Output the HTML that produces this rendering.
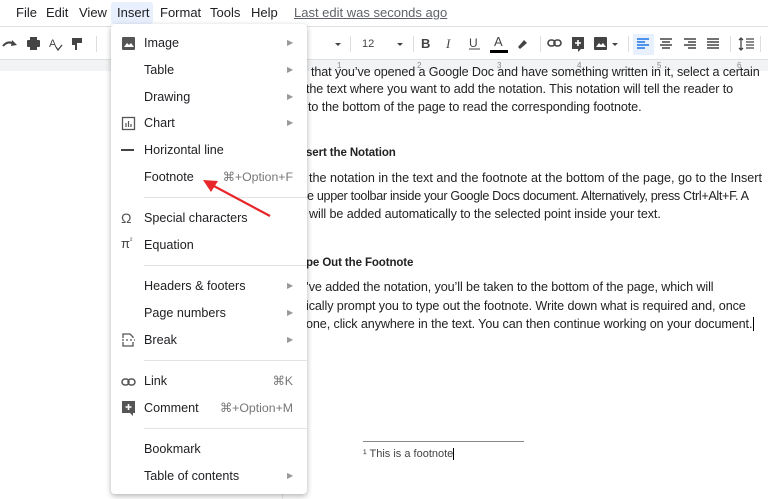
<!DOCTYPE html>
<html><head><meta charset="utf-8"><style>
*{margin:0;padding:0;box-sizing:border-box}
body{width:768px;height:499px;overflow:hidden;background:#fff;font-family:"Liberation Sans",Arial,sans-serif;position:relative;color:#202124}
.abs{position:absolute;white-space:nowrap}
.mb{top:5px;font-size:13px;color:#202124}
.t{font-size:12.6px;color:#222;position:absolute;white-space:nowrap;font-family:"Liberation Sans",sans-serif;letter-spacing:-0.1px}
.h{font-weight:bold;font-size:11.5px}
.menu{position:absolute;left:111px;top:24px;width:196px;height:470px;background:#fff;border-radius:4px;box-shadow:0 2px 6px rgba(0,0,0,.3)}
.mi{position:absolute;left:33px;font-size:12.6px;color:#202124;white-space:nowrap}
.arr{position:absolute;left:176px;font-size:8px;color:#999}
.sc{position:absolute;right:14px;font-size:12.3px;color:#777}
.sep{position:absolute;left:33px;right:0;height:1px;background:#e2e2e2}
.ic{position:absolute;left:10px}
</style></head><body>
<div class="abs" style="left:111px;top:2px;width:42px;height:22px;background:#e8f0fe;border-radius:3px"></div>
<div class="abs mb" style="left:16px">File</div>
<div class="abs mb" style="left:46px">Edit</div>
<div class="abs mb" style="left:79px">View</div>
<div class="abs mb" style="left:117px">Insert</div>
<div class="abs mb" style="left:160px">Format</div>
<div class="abs mb" style="left:210px">Tools</div>
<div class="abs mb" style="left:251px">Help</div>
<div class="abs mb" style="left:294px;color:#5f6368;text-decoration:underline">Last edit was seconds ago</div>
<div class="abs" style="left:0;top:26px;width:768px;height:1px;background:#e0e0e0"></div>
<svg class="abs" style="left:0;top:30px" width="768" height="28" viewBox="0 0 768 28">
<g fill="#444" stroke="#444">
<path d="M3 16 q5-6 11-2" fill="none" stroke-width="2"/><path d="M12 10 l5 5 l-6 1z" stroke="none"/>
<rect x="27" y="10" width="13" height="7" rx="1" stroke="none"/><rect x="30" y="7" width="7" height="3" stroke="none"/><rect x="30" y="16" width="7" height="4" stroke="none"/>
<text x="49" y="17" font-size="11" stroke="none" font-family="Liberation Sans">A</text><path d="M56 17 l2 3 l4-5" fill="none" stroke-width="1.3"/>
<path d="M72 8 h10 v5 h-5 v7 h-2 v-5 h-3z" stroke="none"/>
<rect x="96" y="6" width="1" height="16" fill="#ddd" stroke="none"/>
<path d="M335 13 l3 3 l3-3z" stroke="none"/><rect x="350" y="6" width="1" height="16" fill="#ddd" stroke="none"/>
<text x="362" y="17" font-size="11" stroke="none" font-family="Liberation Sans">12</text>
<path d="M397 13 l3 3 l3-3z" stroke="none"/><rect x="413" y="6" width="1" height="16" fill="#ddd" stroke="none"/>
<text x="421" y="18" font-size="13" font-weight="bold" stroke="none" font-family="Liberation Sans">B</text>
<text x="446" y="18" font-size="13" font-style="italic" stroke="none" font-family="Liberation Serif">I</text>
<text x="469" y="17" font-size="12" stroke="none" font-family="Liberation Sans">U</text>
<path d="M469 19 h11" stroke-width="1"/>
<text x="494" y="16" font-size="13" stroke="none" font-family="Liberation Sans">A</text><rect x="490" y="20" width="18" height="3" fill="#000" stroke="none"/>
<path d="M518 17 l6-7 l3 3 l-7 6z" stroke="none"/>
<rect x="540" y="6" width="1" height="16" fill="#ddd" stroke="none"/>
<rect x="548" y="10" width="7" height="6" rx="3" fill="none" stroke-width="1.6"/><rect x="554" y="10" width="7" height="6" rx="3" fill="none" stroke-width="1.6"/>
<path d="M572 7 h12 v12 h-3 l-3 3 v-3 h-6z" stroke="none"/><path d="M578 10 v6 M575 13 h6" stroke="#fff" stroke-width="1.6"/>
<rect x="594" y="7" width="13" height="13" rx="1" stroke="none"/><path d="M596 17 l3-4 l2 2 l2-2 l3 4z" fill="#fff" stroke="none"/>
<path d="M612 13 l3 3 l3-3z" stroke="none"/>
<rect x="628" y="6" width="1" height="16" fill="#ddd" stroke="none"/>
<rect x="633" y="4" width="21" height="21" fill="#e8f0fe" stroke="none"/>
<path d="M637 9h12M637 12h8M637 15h12M637 18h8" stroke="#1a73e8" stroke-width="1.4"/>
<path d="M660 9h12M662 12h8M660 15h12M662 18h8" stroke-width="1.4"/>
<path d="M684 9h12M688 12h8M684 15h12M688 18h8" stroke-width="1.4"/>
<path d="M707 9h12M707 12h12M707 15h12M707 18h12" stroke-width="1.4"/>
<rect x="730" y="6" width="1" height="16" fill="#ddd" stroke="none"/>
<path d="M741 8 v12 M739 10 l2-2 2 2 M739 18 l2 2 2-2 M746 9h8M746 12h8M746 15h8M746 18h8" fill="none" stroke-width="1.3"/>
<rect x="760" y="6" width="1" height="16" fill="#ddd" stroke="none"/>
</g></svg>
<div class="abs" style="left:0;top:59px;width:768px;height:12px;background:#f1f3f4;border-top:1px solid #e0e0e0"></div>
<svg class="abs" style="left:300px;top:60px" width="468" height="11"><g fill="#888" font-size="8" font-family="Liberation Sans">
<text x="37" y="8">1</text><text x="117" y="8">2</text><text x="197" y="8">3</text><text x="277" y="8">4</text><text x="357" y="8">5</text><text x="437" y="8">6</text></g></svg>
<div class="abs" style="left:282px;top:71px;width:1px;height:428px;background:#e8e8e8"></div>
<div class="t" style="left:311px;top:65px;letter-spacing:-0.13px">that you’ve opened a Google Doc and have something written in it, select a certain</div>
<div class="t" style="left:306px;top:82px">the text where you want to add the notation. This notation will tell the reader to</div>
<div class="t" style="left:308px;top:100px">to the bottom of the page to read the corresponding footnote.</div>
<div class="t h" style="left:306px;top:147px">sert the Notation</div>
<div class="t" style="left:309px;top:171px;letter-spacing:0px">the notation in the text and the footnote at the bottom of the page, go to the Insert</div>
<div class="t" style="left:307px;top:189px;letter-spacing:-0.33px">e upper toolbar inside your Google Docs document. Alternatively, press Ctrl+Alt+F. A</div>
<div class="t" style="left:309px;top:207px">will be added automatically to the selected point inside your text.</div>
<div class="t h" style="left:306px;top:257px">pe Out the Footnote</div>
<div class="t" style="left:306px;top:280px">’ve added the notation, you’ll be taken to the bottom of the page, which will</div>
<div class="t" style="left:306px;top:299px">ically prompt you to type out the footnote. Write down what is required and, once</div>
<div class="t" style="left:306px;top:317px">one, click anywhere in the text. You can then continue working on your document.<span style="border-left:1.5px solid #000;margin-left:1px"></span></div>
<div class="abs" style="left:363px;top:441px;width:161px;height:1px;background:#888"></div>
<div class="abs" style="left:363px;top:448px;font-size:11px;color:#444">¹ This is a footnote<span style="border-left:1px solid #000"></span></div>
<div class="menu">
<svg class="ic" style="top:12px" width="16" height="16"><rect x="1" y="1" width="13" height="13" rx="1" fill="#555"/><path d="M3 11 l3-4 l2 2 l2-2 l3 4z" fill="#fff"/></svg>
<div class="mi" style="top:12px">Image</div><div class="arr" style="top:14px">▶</div>
<div class="mi" style="top:39px">Table</div><div class="arr" style="top:41px">▶</div>
<div class="mi" style="top:66px">Drawing</div><div class="arr" style="top:68px">▶</div>
<svg class="ic" style="top:92px" width="16" height="16"><rect x="1.5" y="1.5" width="12" height="12" fill="none" stroke="#555" stroke-width="1.3"/><path d="M5 11V7M7.5 11V5M10 11V8" stroke="#555" stroke-width="1.2"/></svg>
<div class="mi" style="top:92px">Chart</div><div class="arr" style="top:94px">▶</div>
<div class="abs" style="left:10px;top:125px;width:13px;height:1.5px;background:#444"></div>
<div class="mi" style="top:119px">Horizontal line</div>
<div class="mi" style="top:146px">Footnote</div><div class="sc" style="top:146px">⌘+Option+F</div>
<div class="sep" style="top:173px"></div>
<div class="abs" style="left:10px;top:186px;font-size:14px;color:#555">Ω</div>
<div class="mi" style="top:187px">Special characters</div>
<div class="abs" style="left:10px;top:212px;font-size:13px;color:#444">π<sup style="font-size:7px">²</sup></div>
<div class="mi" style="top:214px">Equation</div>
<div class="sep" style="top:241px"></div>
<div class="mi" style="top:255px">Headers &amp; footers</div><div class="arr" style="top:257px">▶</div>
<div class="mi" style="top:282px">Page numbers</div><div class="arr" style="top:284px">▶</div>
<svg class="ic" style="top:308px" width="16" height="16"><path d="M2 6V2h7l3 3v1M2 10v4h10v-4M1 8h2M5 8h2M9 8h2M13 8h1" fill="none" stroke="#555" stroke-width="1.3"/></svg>
<div class="mi" style="top:309px">Break</div><div class="arr" style="top:311px">▶</div>
<div class="sep" style="top:336px"></div>
<svg class="ic" style="top:350px" width="16" height="16"><rect x="1" y="5" width="7" height="6" rx="3" fill="none" stroke="#555" stroke-width="1.5"/><rect x="7" y="5" width="7" height="6" rx="3" fill="none" stroke="#555" stroke-width="1.5"/></svg>
<div class="mi" style="top:350px">Link</div><div class="sc" style="top:350px">⌘K</div>
<svg class="ic" style="top:376px" width="16" height="16"><path d="M1 1h13v12h-2v3l-3-3H1z" fill="#555"/><path d="M7.5 4v6M4.5 7h6" stroke="#fff" stroke-width="1.6"/></svg>
<div class="mi" style="top:377px">Comment</div><div class="sc" style="top:377px">⌘+Option+M</div>
<div class="sep" style="top:404px"></div>
<div class="mi" style="top:418px">Bookmark</div>
<div class="mi" style="top:445px">Table of contents</div><div class="arr" style="top:447px">▶</div>
</div>
<svg class="abs" style="left:0;top:0" width="768" height="499"><path d="M270 216 L212 185" stroke="#e8262a" stroke-width="2.2"/><path d="M203 180 L218 181 L211 192z" fill="#e8262a"/></svg>
</body></html>
